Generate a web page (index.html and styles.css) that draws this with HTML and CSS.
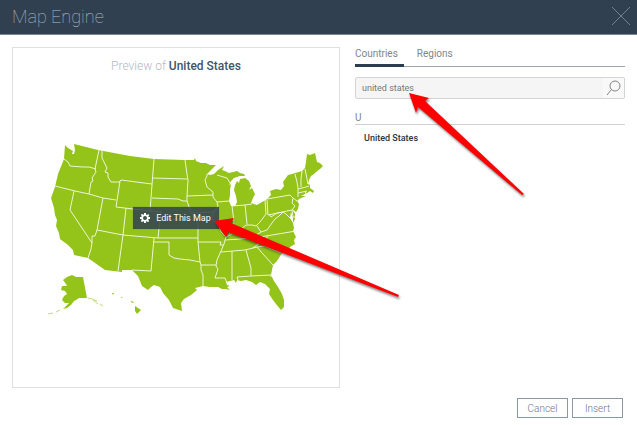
FILE: index.html
```
<!DOCTYPE html>
<html lang="en">

<head>
    <meta charset="UTF-8">
    <meta name="viewport" content="width=device-width, initial-scale=1.0">
    <title>Map Engine</title>
    <link rel="stylesheet" href="styles.css">
</head>
<body>
    <header class="header">
        <h1>Map Engine</h1>
        <button type="button" class="close" aria-label="Close">
            <svg width="20" height="20" viewBox="0 0 20 20"><path d="M1 1L19 19M19 1L1 19"/></svg>
        </button>
    </header>

    <main class="content">
        <section class="preview">
            <h2>Preview of <strong>United States</strong></h2>
            <div class="map-box">
                <svg class="map" viewBox="48 140 280 180">
                    <!-- Mainland -->
                    <path class="land" d="M65 145L68 148L73 151L72 154L74 154L75 150L74 144L98 150L130 156L154 159L185 160L194 160L195 158L196 161L201 163L206 163L210 165L216 165L212 169L207 174L210 175L214 174L218 170L224 166L222 170L225 171L229 173L233 172L237 171L240 173L244 174L245 176L240 176L237 177L234 178L231 181L229 185L231 184L230 190L230 195L229 201L231 206L235 206L237 202L236 196L234 190L235 185L237 181L239 183L240 179L245 178L249 181L251 186L249 190L252 188L255 194L253 198L251 203L257 205L262 202L266 200L271 195L270 191L276 189L281 190L284 186L283 182L288 175L292 174L302 171L305 168L306 162L307 154L310 155L315 153L317 162L320 163L323 166L320 169L316 172L314 174L311 176L309 180L308 184L310 185L310 188L314 191L313 193L310 191L307 193L301 196L306 196L299 199L297 201L299 204L298 209L296 212L292 209L295 214L295 219L293 223L293 218L291 212L290 218L293 223L294 228L293 231L296 237L294 240L295 244L290 247L288 251L282 253L277 261L273 265L271 275L274 281L278 287L282 294L284 300L284 307L281 310L276 304L273 300L269 294L270 289L265 284L260 282L256 285L252 282L246 280L241 281L237 280L236 283L234 280L226 282L227 285L230 286L227 287L230 290L226 289L222 289L218 287L210 287L203 286L195 288L197 290L191 295L184 299L181 303L182 311L173 308L169 300L163 293L160 287L154 285L151 287L148 290L142 286L138 276L132 270L122 270L122 272L105 270L88 258L74 255L73 250L68 245L60 239L59 233L56 226L57 220L55 215L54 208L51 198L55 187L58 174L64 159Z"/>
                    <!-- Alaska -->
                    <path class="land" d="M63 280L67 277L72 275L76 277L83 277L87 298L84 298L79 298L76 300L74 301L71 305L67 308L63 309L66 306L69 303L65 303L62 300L64 296L67 294L65 291L61 290L62 286L67 286L66 284Z"/>
                    <path class="islands" d="M60 310L56 312M53 313L48 314M88 298L92 299L97 301M93 300L98 304M100 304L103 306"/>
                    <!-- Hawaii -->
                    <path class="land" d="M135 306L141 310L137 314L135 311ZM131 301L134 302L133 303L131 302ZM112 293L114 293L113 295ZM121 297L123 298L121 298Z"/>
                    <!-- State borders -->
                    <path class="borders" d="M64 159L68 162L70 166L83 167L89 167L96 169M99 150L95 169L96 172L92 178L93 181L91 182L89 194M55 186L75 191L89 194L103 198L116 200M102 151L102 158L107 168L105 172L108 173L108 177L111 182L119 182L121 180L152 184M120 181L116 207L150 211M154 159L150 211M153 178L187 179M152 198L178 199L183 201L187 201M185 160L187 174L188 180L187 196L187 201L191 212L195 219L198 224L198 238M187 196L213 195M207 174L207 176L205 180L207 187L213 192L213 197L217 202L218 206L214 212L212 218L215 223L220 228L221 232L226 237L225 240L224 244L221 251L217 260L216 266L218 269L215 278L225 278L227 283M217 202L229 201M217 175L227 178L230 183M192 213L214 212M74 191L70 210L92 243L91 249L88 258M103 198L97 230L95 236L92 236L92 243M126 208L123 235L118 271M97 230L123 235L158 238L198 238M150 211L161 212L160 219L195 220M160 219L158 238M154 238L151 271L132 270M153 242L169 242L169 255L174 258L180 259L190 260L200 262M198 238L198 242L200 262L201 265L201 270L203 275L203 286M198 242L221 242L220 245L223 245M201 265L216 265M225 240L240 239L260 237L296 231M221 252L245 250L257 247L265 246L269 248L281 253M253 248L257 245L265 240L268 236M232 251L232 280M246 250L251 268L251 276L237 277L238 280M251 276L271 275L271 277M257 247L263 254L273 265M232 206L234 222L232 230L228 236M232 206L245 205L252 204M245 205L247 224M226 237L232 234L236 230L240 230L246 225L252 225L256 226L260 222L266 214L265 200M257 226L261 232L253 237M261 232L267 230L272 223L275 219L279 216L283 212L286 214L291 219M267 200L268 215L292 210L293 217L295 217M269 214L271 217L277 213L283 212M267 199L290 195L293 198L292 203L295 206L292 210M293 198L297 201M295 174L297 182L298 188L298 197M302 171L301 179L301 187M305 169L308 184M298 189L306 187L309 186M298 193L307 191M305 191L306 195"/>
                </svg>
                <button type="button" class="edit">
                    <svg width="10" height="10" viewBox="0 0 10 10"><path fill-rule="evenodd" d="M4 0H6L6 1.500L7 2L8.200 1L9.300 2.200L8.300 3.300L8.600 4L10 4V6L8.600 6L8.200 7L9.200 8L8 9.200L7 8.300L6 8.600V10H4V8.600L3 8.300L2 9.200L.8 8L1.700 7L1.400 6H0V4H1.400L1.700 3L.8 2L2 .8L3 1.700L4 1.400ZM5 3A2 2 0 1 0 5 7A2 2 0 1 0 5 3Z"/></svg>
                    Edit This Map
                </button>
            </div>
        </section>

        <section class="picker">
            <nav class="tabs">
                <a href="#countries" class="active">Countries</a>
                <a href="#regions">Regions</a>
            </nav>
            <form class="search">
                <input type="text" aria-label="Search countries" value="united states">
                <button type="submit" aria-label="Search">
                    <svg width="16" height="16" viewBox="0 0 16 16"><circle cx="9" cy="6" r="5"/><path d="M5.500 9.500L1 15"/></svg>
                </button>
            </form>
            <h3 id="countries">U</h3>
            <ul class="results">
                <li><a href="#united-states">United States</a></li>
            </ul>
        </section>
    </main>

    <footer class="footer">
        <button type="button">Cancel</button>
        <button type="button">Insert</button>
    </footer>

    <!-- Pointer arrows -->
    <svg class="arrows" width="637" height="425" viewBox="0 0 637 425">
        <path d="M409 93L429 98L425 101L524 194L522 195L418 107L416 113Z"/>
        <path d="M214 221L234 218L231 223L399 295L398 297L228 232L226 237Z"/>
    </svg>
</body>
</html>
```
FILE: styles.css
```
* {
    box-sizing: border-box;
}
body {
    margin: 0;
    background-color: #fff;
    font-family: Roboto, sans-serif;
    font-size: 10px;
    color: #7f858d;
    position: relative;
}
h1, h2, h3, ul {
    margin: 0;
    padding: 0;
    font-weight: normal;
}
a {
    color: inherit;
    text-decoration: none;
}
button {
    font-family: inherit;
    cursor: pointer;
}
.header {
    display: flex;
    justify-content: space-between;
    align-items: center;
    height: 35px;
    padding: 0 6px 2px 12px;
    background-color: #314051;
    border-bottom: 1px solid #7d8794;
}
.header h1 {
    font-size: 18px;
    font-weight: 100;
    color: #b3bcc8;
}
.close {
    display: flex;
    padding: 0;
    border: none;
    background: none;
}
.close svg {
    fill: none;
    stroke: #77818e;
}
.content {
    display: grid;
    grid-template-columns: 328fr 270fr;
    gap: 15px;
    padding: 12px 12px 10px;
}
.preview {
    border: 1px solid #dfe0e2;
    padding: 8px 0 67px;
}
.preview h2 {
    font-size: 12px;
    line-height: 20px;
    font-weight: 300;
    text-align: center;
    color: #b5b8c4;
}
.preview strong {
    font-weight: 500;
    color: #43546a;
}
.map-box {
    display: grid;
    place-items: center;
    padding: 64px 11px 0 35px;
}
.map,
.edit {
    grid-area: 1 / 1;
}
.map {
    display: block;
    width: 100%;
}
.land {
    fill: #94c31a;
}
.borders {
    fill: none;
    stroke: #eef5d4;
    stroke-linejoin: round;
}
.islands {
    fill: none;
    stroke: #bfdc78;
}
.edit {
    display: flex;
    align-items: center;
    gap: 6px;
    height: 22px;
    margin: 0 24px 24px 0;
    padding: 0 8px 0 7px;
    border: none;
    background-color: rgba(49, 64, 81, 0.85);
    box-shadow: 0 0 1px #69777b;
    font-size: 9px;
    color: #fff;
    position: relative;
}
.edit svg {
    fill: #fff;
}
.tabs {
    display: flex;
    gap: 13px;
    border-bottom: 1px solid #9ca5b1;
    line-height: 14px;
}
.tabs a {
    margin-bottom: -1px;
    padding: 0 6px 3px 0;
    border-bottom: 3px solid transparent;
}
.tabs .active {
    border-color: #2d3d51;
}
.search {
    display: flex;
    height: 22px;
    margin-top: 10px;
    border: 1px solid #d3d4d6;
    border-radius: 2px;
    background-color: #f5f5f5;
}
.search input {
    flex: 1;
    min-width: 0;
    padding: 0 6px;
    border: none;
    background: none;
    font-family: inherit;
    font-size: 9px;
    color: #777;
}
.search button {
    display: flex;
    align-items: center;
    padding: 0 2px 0 3px;
    border: none;
    background-color: #f9f9f9;
}
.search svg {
    fill: none;
    stroke: #858585;
}
.picker h3 {
    margin-top: 12px;
    border-bottom: 1px solid #d0d0d0;
    font-size: 10px;
    line-height: 13px;
}
.results {
    padding: 7px 9px;
    list-style: none;
    font-size: 9px;
    line-height: 13px;
    font-weight: 500;
    color: #303338;
}
.footer {
    display: flex;
    justify-content: flex-end;
    gap: 4px;
    padding: 0 14px 8px;
}
.footer button {
    width: 51px;
    height: 20px;
    padding: 0;
    border: 1px solid #8c98a5;
    background-color: #fff;
    font-size: 10px;
    font-weight: 300;
    color: #6d7787;
}
.arrows {
    position: absolute;
    top: 0;
    left: 0;
    pointer-events: none;
    fill: #f00;
    filter: drop-shadow(1px 2px 1px rgba(0, 0, 0, 0.5));
}
```
